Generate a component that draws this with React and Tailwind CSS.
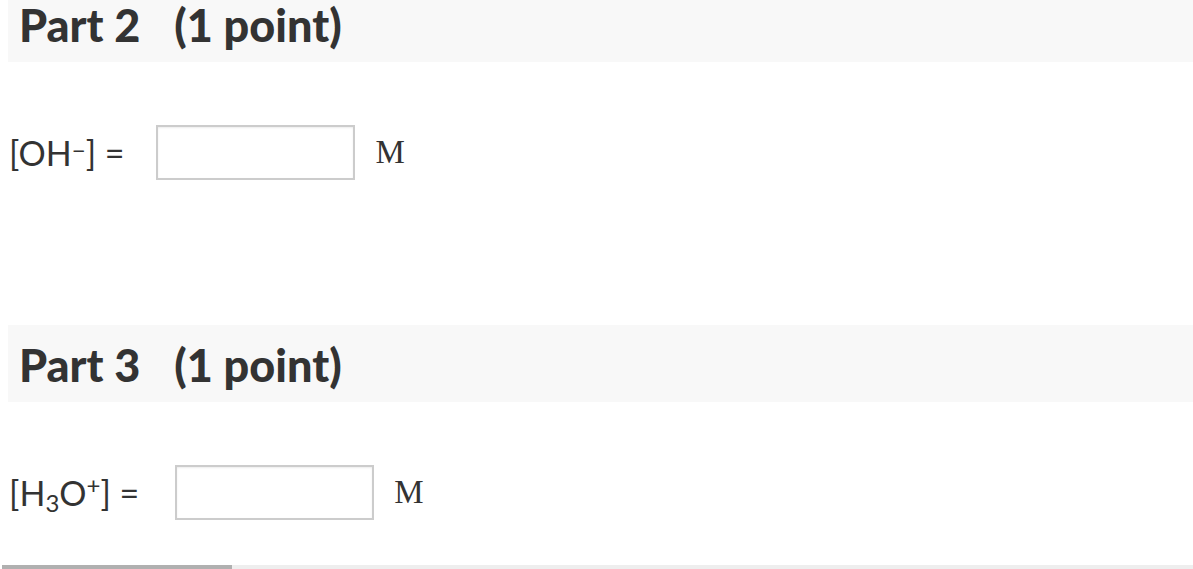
export default function App() {
  return (
    <div className="min-h-[569px] bg-white text-[#333] overflow-hidden flex flex-col" style={{ fontFamily: "Lato, sans-serif" }}>
      <PartHeader label="Part 2" points="(1 point)" height="h-[62px]" />
      <AnswerRow
        className="mt-[63px]"
        gap="ml-[32px]"
        label={<>[OH<sup className="text-[24px] relative -top-[7px]">−</sup>]&nbsp;=</>}
      />
      <PartHeader label="Part 3" points="(1 point)" height="h-[77px] mt-[145px]" />
      <AnswerRow
        className="mt-[63px]"
        gap="ml-[36px]"
        label={<>[H<sub className="text-[24px]">3</sub>O<sup className="text-[24px]">+</sup>]&nbsp;=</>}
      />
      <div className="mt-auto flex h-[4px] ml-[2px]">
        <div className="w-[230px] bg-[#b0b0b0]" />
        <div className="flex-1 bg-[#eeeeee]" />
      </div>
    </div>
  );
}

function PartHeader({ label, points, height }) {
  return (
    <div className={"ml-[8px] bg-[#f8f8f8] flex items-end pl-[11px] pb-[14px] " + height}>
      <h2 className="text-[45px] font-black leading-none">
        {label}
        <span className="ml-[34px]">{points}</span>
      </h2>
    </div>
  );
}

function AnswerRow({ label, gap, className = "" }) {
  return (
    <div className={"flex items-center h-[55px] pl-[9px] " + className}>
      <span className="text-[34px] leading-none">{label}</span>
      <input
        type="text"
        className={gap + " w-[199px] h-[55px] border-2 border-[#cccccc] shadow-[inset_0_1px_2px_rgba(0,0,0,0.08)] outline-none"}
      />
      <span className="ml-[20px] text-[33px]" style={{ fontFamily: '"Liberation Serif", serif' }}>M</span>
    </div>
  );
}
